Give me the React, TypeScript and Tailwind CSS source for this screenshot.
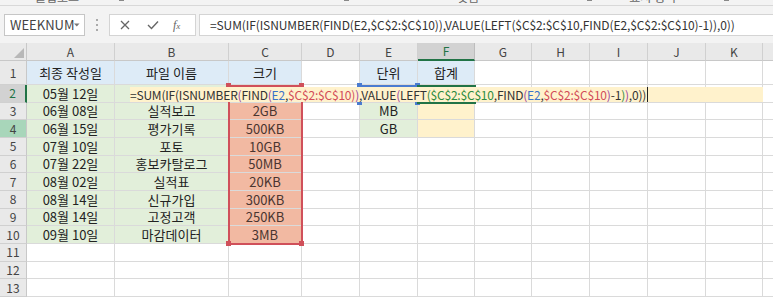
import React from "react";

type Cell = { t?: string; bg?: string; c?: string };
type Row = { n: string; h: string; hdr?: string; cells: Record<string, Cell> };

const COLS = [
  { k: "A", w: "w-[88px]" },
  { k: "B", w: "w-[114px]" },
  { k: "C", w: "w-[73px]" },
  { k: "D", w: "w-[58px]" },
  { k: "E", w: "w-[58px]" },
  { k: "F", w: "w-[57px]" },
  { k: "G", w: "w-[57px]" },
  { k: "H", w: "w-[58px]" },
  { k: "I", w: "w-[58px]" },
  { k: "J", w: "w-[58px]" },
  { k: "K", w: "w-[57px]" },
  { k: "L", w: "w-[40px]" },
];

const BLUE = "bg-[#ddebf7]";
const GREEN = "bg-[#e2efda]";
const SALMON = "bg-[#f2b9a2]";
const YELLOW = "bg-[#fff2cc]";

const data: [string, string, string][] = [
  ["05월 12일", "", ""],
  ["06월 08일", "실적보고", "2GB"],
  ["06월 15일", "평가기록", "500KB"],
  ["07월 10일", "포토", "10GB"],
  ["07월 22일", "홍보카탈로그", "50MB"],
  ["08월 02일", "실적표", "20KB"],
  ["08월 14일", "신규가입", "300KB"],
  ["08월 14일", "고정고객", "250KB"],
  ["09월 10일", "마감데이터", "3MB"],
];

const rows: Row[] = [
  {
    n: "1",
    h: "h-[24px]",
    cells: {
      A: { t: "최종 작성일", bg: BLUE },
      B: { t: "파일 이름", bg: BLUE },
      C: { t: "크기", bg: BLUE },
      E: { t: "단위", bg: BLUE },
      F: { t: "합계", bg: BLUE },
    },
  },
  ...data.map((d, i) => {
    const n = i + 2;
    const cells: Record<string, Cell> = {
      A: { t: d[0], bg: GREEN },
      B: { t: d[1], bg: GREEN },
      C: { t: d[2], bg: SALMON, c: "text-[#4a3530]" },
    };
    if (n === 2) {
      cells.E = { bg: GREEN };
      cells.F = { bg: YELLOW };
    }
    if (n === 3) {
      cells.E = { t: "MB", bg: GREEN };
      cells.F = { bg: YELLOW };
    }
    if (n === 4) {
      cells.E = { t: "GB", bg: GREEN };
      cells.F = { bg: YELLOW };
    }
    return {
      n: String(n),
      h: "h-[17.67px]",
      hdr:
        n === 2
          ? "bg-[#d2d2d2] text-[#217346] border-r-2 border-r-[#217346]"
          : n === 4
          ? "bg-[#a8d6ba] text-[#444] border-r border-r-[#c8c8c8]"
          : undefined,
      cells,
    } as Row;
  }),
  { n: "11", h: "h-[17.67px]", cells: {} },
  { n: "12", h: "h-[17.67px]", cells: {} },
  { n: "13", h: "h-[17.67px]", cells: {} },
];

const DK = "text-[#333]";
const PU = "text-[#9a3fa0]";
const GR = "text-[#2e8b3e]";
const BL = "text-[#3b73c9]";
const RD = "text-[#d24c58]";

const segs: [string, string][] = [
  ["=SUM(IF(ISNUMBER", DK],
  ["(", PU],
  ["FIND", DK],
  ["(", PU],
  ["E2", BL],
  [",", DK],
  ["$C$2:$C$10", RD],
  [")", RD],
  [")", PU],
  [",VALUE", DK],
  ["(", PU],
  ["LEFT", DK],
  ["(", GR],
  ["$C$2:$C$10", GR],
  [",FIND", DK],
  ["(", PU],
  ["E2", BL],
  [",", DK],
  ["$C$2:$C$10", RD],
  [")", PU],
  ["-1", DK],
  [")", GR],
  [")", PU],
  [",0))", DK],
];

const FORMULA =
  "=SUM(IF(ISNUMBER(FIND(E2,$C$2:$C$10)),VALUE(LEFT($C$2:$C$10,FIND(E2,$C$2:$C$10)-1)),0))";

function Handle({ cls }: { cls: string }) {
  return <div className={`absolute w-[5px] h-[5px] ${cls}`} />;
}

export default function App() {
  return (
    <div className="w-[773px] h-[297px] overflow-hidden bg-white font-['Noto_Sans_CJK_KR','Noto_Sans',sans-serif] text-[#222]">
      {/* ribbon remnant */}
      <div className="h-[6px] bg-[#f3f3f3] border-b border-[#d8d8d8] overflow-hidden flex items-start text-[12px] text-[#666] leading-[14px]">
        <span className="ml-[35px] mt-[-10px]">클립보드</span>
        <span className="ml-[40px] mt-[-4px] w-[5px] h-[5px] border border-[#888]" />
        <span className="ml-[220px] mt-[-4px] w-[5px] h-[5px] border border-[#888]" />
        <span className="ml-[108px] mt-[-10px]">맞춤</span>
        <span className="ml-[108px] mt-[-4px] w-[5px] h-[5px] border border-[#888]" />
        <span className="ml-[37px] mt-[-10px]">표시 형식</span>
        <span className="ml-[48px] mt-[-4px] w-[5px] h-[5px] border border-[#888]" />
      </div>

      {/* formula bar */}
      <div className="h-[37px] bg-[#f3f3f3] flex items-start pt-[8px]">
        <div className="ml-[4px] w-[81px] h-[22px] bg-white border border-[#c6c6c6] flex items-center pl-[5px] pr-[4px] text-[13px] text-[#444]">
          <span className="flex-1">WEEKNUM</span>
          <svg width="7" height="4" viewBox="0 0 7 4">
            <path d="M0 0 L7 0 L3.5 4 Z" fill="#777" />
          </svg>
        </div>
        <div className="ml-[11px] mt-[5px] flex flex-col gap-[3px]">
          <span className="w-[2px] h-[2px] bg-[#aaa]" />
          <span className="w-[2px] h-[2px] bg-[#aaa]" />
          <span className="w-[2px] h-[2px] bg-[#aaa]" />
        </div>
        <div className="ml-[11px] w-[87px] h-[22px] bg-white border border-[#d4d4d4] flex items-center">
          <svg className="ml-[10px]" width="10" height="10" viewBox="0 0 10 10">
            <path d="M1 1 L9 9 M9 1 L1 9" stroke="#666" strokeWidth="1.3" />
          </svg>
          <svg className="ml-[17px]" width="12" height="10" viewBox="0 0 12 10">
            <path d="M1 5 L4.5 8.5 L11 1.5" stroke="#666" strokeWidth="1.4" fill="none" />
          </svg>
          <span className="ml-[14px] text-[12px] italic text-[#666] font-['Liberation_Serif',serif] leading-none">
            f<span className="text-[9px]">x</span>
          </span>
        </div>
        <div className="ml-[3px] flex-1 h-[22px] bg-white border border-r-0 border-[#d4d4d4] flex items-center pl-[10px] text-[12px] text-[#333] whitespace-nowrap tracking-[-0.1px]">
          {FORMULA}
        </div>
      </div>

      {/* grid */}
      <div className="relative text-[13px]">
        {/* column headers */}
        <div className="flex h-[18px]">
          <div className="w-[27px] shrink-0 bg-[#e9e9e9] border-r border-b border-[#c8c8c8] relative">
            <svg className="absolute right-[2px] bottom-[2px]" width="10" height="10" viewBox="0 0 10 10">
              <path d="M10 0 L10 10 L0 10 Z" fill="#b8b8b8" />
            </svg>
          </div>
          {COLS.map((c) => (
            <div
              key={c.k}
              className={`${c.w} shrink-0 flex items-center justify-center text-[12px] border-r ${
                c.k === "F"
                  ? "bg-[#d2d2d2] text-[#217346] border-b-2 border-b-[#217346] border-r-[#bdbdbd]"
                  : "bg-[#e9e9e9] text-[#444] border-b border-[#c8c8c8] border-r-[#d0d0d0]"
              }`}
            >
              {c.k}
            </div>
          ))}
        </div>

        {rows.map((r) => (
          <div key={r.n} className={`flex ${r.h}`}>
            <div
              className={`w-[27px] shrink-0 flex items-center justify-center text-[12px] border-b border-[#d0d0d0] ${
                r.hdr ?? "bg-[#e9e9e9] text-[#444] border-r border-r-[#c8c8c8]"
              }`}
            >
              {r.n}
            </div>
            {COLS.map((c) => {
              const cell = r.cells[c.k];
              return (
                <div
                  key={c.k}
                  className={`${c.w} shrink-0 flex items-center justify-center whitespace-nowrap border-r border-b border-[#dadada] ${
                    cell?.bg ?? "bg-white"
                  } ${cell?.c ?? "text-[#222]"}`}
                >
                  {cell?.t}
                </div>
              );
            })}
          </div>
        ))}

        {/* red range C2:C10 */}
        <div className="absolute left-[228px] top-[42px] w-[75px] h-[160px] border-2 border-[#d0505a]" />
        <Handle cls="left-[226px] top-[40px] bg-[#d0505a]" />
        <Handle cls="left-[299px] top-[40px] bg-[#d0505a]" />
        <Handle cls="left-[226px] top-[198px] bg-[#d0505a]" />
        <Handle cls="left-[299px] top-[198px] bg-[#d0505a]" />

        {/* blue E2 */}
        <div className="absolute left-[359px] top-[42px] w-[60px] h-[2px] bg-[#4a7bd0]" />
        <Handle cls="left-[357px] top-[40px] bg-[#4a7bd0]" />
        <Handle cls="left-[415px] top-[40px] bg-[#4a7bd0]" />
        <Handle cls="left-[357px] top-[57px] bg-[#4a7bd0]" />
        <Handle cls="left-[415px] top-[57px] bg-[#4a7bd0]" />

        {/* active cell F2 */}
        <div className="absolute left-[417px] top-[42px] w-[59px] h-[19px] border-2 border-[#217346]" />

        {/* in-cell editor */}
        <div className="absolute left-[130px] top-[44px] w-[633px] h-[15px] bg-[#fff2cc] flex items-center whitespace-nowrap text-[12px] tracking-[-0.2px] leading-none">
          {segs.map(([t, c], i) => (
            <span key={i} className={c}>
              {t}
            </span>
          ))}
          <span className="ml-[1px] w-[1px] h-[15px] bg-[#222]" />
        </div>
      </div>
    </div>
  );
}
